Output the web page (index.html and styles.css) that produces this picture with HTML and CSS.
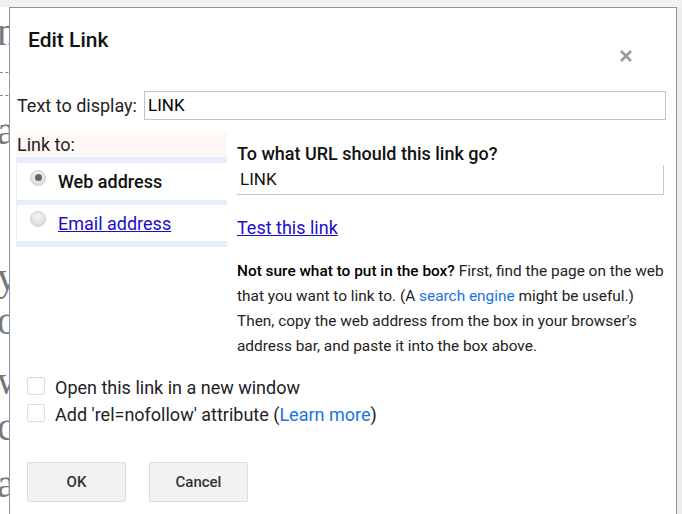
FILE: index.html
```html
<!DOCTYPE html>
<html>
<head>
<meta charset="utf-8">
<link rel="stylesheet" href="styles.css">
</head>
<body>
<div class="page">
  <div class="topbar"></div>
  <div class="doc-area">
    <div class="doc">
      <div class="doc-line l1">n</div>
      <div class="dash d1"></div>
      <div class="dash d2"></div>
      <div class="doc-line l2">a</div>
      <div class="doc-line l3">y</div>
      <div class="doc-line l4">o</div>
      <div class="doc-line l5">w</div>
      <div class="doc-line l6">c</div>
      <div class="doc-line l7">a</div>
    </div>
    <div class="gutter"></div>
  </div>
</div>

<div class="dialog">
  <div class="title">Edit Link</div>
  <button class="close" aria-label="Close">
    <svg width="14" height="14" viewBox="0 0 14 14"><path d="M2 2L12 12M12 2L2 12" stroke="#9a9a9a" stroke-width="2.6" stroke-linecap="butt"/></svg>
  </button>

  <div class="display-row">
    <label class="display-label">Text to display:</label>
    <div class="text-input">LINK</div>
  </div>

  <div class="link-area">
    <div class="tabs">
      <div class="tabs-head">Link to:</div>
      <div class="tab tab-first">
        <span class="radio checked"></span>
        <span class="tab-label bold">Web address</span>
      </div>
      <div class="tab tab-second">
        <span class="radio"></span>
        <a class="tab-label link">Email address</a>
      </div>
    </div>
    <div class="pane">
      <div class="question">To what URL should this link go?</div>
      <div class="url-input">LINK</div>
      <a class="test-link">Test this link</a>
      <p class="help"><b>Not sure what to put in the box?</b> First, find the page on the web that you want to link to. (A <a class="blue">search engine</a> might be useful.) Then, copy the web address from the box in your browser's address bar, and paste it into the box above.</p>
    </div>
  </div>

  <div class="options">
    <div class="option"><span class="check"></span><span>Open this link in a new window</span></div>
    <div class="option"><span class="check"></span><span>Add 'rel=nofollow' attribute (<a class="blue">Learn more</a>)</span></div>
  </div>

  <div class="buttons">
    <button class="btn">OK</button>
    <button class="btn">Cancel</button>
  </div>
</div>
</body>
</html>
```

FILE: styles.css
```css
html, body {
  margin: 0;
  padding: 0;
  width: 682px;
  height: 514px;
  overflow: hidden;
  background: #f3f3f3;
  font-family: Roboto, "Liberation Sans", sans-serif;
}

.page {
  width: 682px;
  height: 514px;
  display: flex;
  flex-direction: column;
}

.topbar {
  height: 7px;
  background: #f1f1f1;
}

.doc-area {
  flex: 1;
  display: flex;
}

.doc {
  flex: 1;
  background: #fff;
  font-family: "Liberation Serif", "DejaVu Serif", serif;
  color: #777;
  font-size: 40px;
  display: flex;
  flex-direction: column;
}

.gutter {
  width: 6px;
  background: #ececec;
}

.doc-line {
  line-height: 1;
  height: 36px;
  margin-left: -3px;
}

.dash {
  border-top: 1px dashed #888;
  width: 30px;
  height: 10px;
  box-sizing: border-box;
}

.l1 { margin-top: 5px; }
.d1 { margin-top: 24px; }
.d2 { margin-top: 13px; }
.l2 { margin-top: 6px; }
.l3 { margin-top: 110px; }
.l4 { margin-top: 8px; }
.l5 { margin-top: 24px; }
.l6 { margin-top: 10px; }
.l7 { margin-top: 21px; }

.dialog {
  position: absolute;
  left: 9px;
  top: 7px;
  width: 666px;
  height: 520px;
  background: #fff;
  border: 1px solid #8796ad;
  box-sizing: content-box;
  color: #222;
}

.title {
  font-size: 21px;
  font-weight: 500;
  line-height: 24px;
  padding: 20px 0 0 18px;
  color: #111;
}

.close {
  position: absolute;
  left: 609px;
  top: 41px;
  width: 14px;
  height: 14px;
  padding: 0;
  border: 0;
  background: none;
  display: block;
}
.close svg { display: block; }

.display-row {
  display: flex;
  align-items: center;
  margin: 39px 10px 0 7px;
  gap: 7px;
}

.display-label {
  font-size: 18px;
  color: #222;
}

.text-input {
  flex: 1;
  height: 27px;
  border: 1px solid #c4c4c4;
  font-family: Roboto, "Liberation Sans", sans-serif;
  font-size: 17px;
  line-height: 27px;
  padding-left: 3px;
  color: #000;
}

.link-area {
  display: flex;
  margin: 13px 12px 0 6px;
  gap: 10px;
}

.tabs {
  width: 211px;
  background: #e8eef9;
  padding-bottom: 6px;
  align-self: flex-start;
}

.tabs-head {
  background: #fdf8f3;
  font-size: 18px;
  line-height: 24px;
  padding-left: 1px;
  color: #222;
}

.tab {
  background: #fff;
  margin-left: 1px;
  height: 37px;
  display: flex;
  align-items: center;
  padding-left: 13px;
  gap: 12px;
  font-size: 18px;
}
.tab-first { margin-top: 6px; }
.tab-second { margin-top: 5px; height: 36px; }

.radio {
  width: 16px;
  height: 16px;
  border-radius: 50%;
  background: radial-gradient(circle at 50% 35%, #f4f4f4, #d6d6d6);
  border: 1px solid #cfcfcf;
  box-sizing: border-box;
  position: relative;
  margin-top: -8px;
  flex: none;
}
.radio.checked::after {
  content: "";
  position: absolute;
  left: 3.5px;
  top: 3.5px;
  width: 7px;
  height: 7px;
  border-radius: 50%;
  background: #666;
}

.tab-label { color: #111; }
.bold { font-weight: 500; }
.link {
  color: #1a0dcc;
  text-decoration: underline;
}

.pane {
  flex: 1;
  padding-top: 10px;
}

.question {
  font-size: 18px;
  font-weight: 500;
  line-height: 22px;
  color: #111;
}

.url-input {
  height: 29px;
  border-right: 1px solid #c8c8c8;
  border-bottom: 1px solid #c8c8c8;
  font-family: Roboto, "Liberation Sans", sans-serif;
  font-size: 17px;
  line-height: 29px;
  padding-left: 3px;
  color: #111;
}

.test-link {
  display: block;
  margin-top: 21px;
  font-size: 18px;
  color: #1a0dcc;
  text-decoration: underline;
  line-height: 24px;
}

.help {
  margin: 19px 0 0 0;
  font-size: 15.4px;
  line-height: 25px;
  color: #222;
}
.help b { font-weight: 500; color: #000; }

.blue { color: #1a73e8; }

.options {
  margin: 19px 0 0 17px;
  display: flex;
  flex-direction: column;
  gap: 8px;
}

.option {
  display: flex;
  align-items: center;
  gap: 10px;
  font-size: 18px;
  line-height: 19px;
  color: #222;
}

.check {
  width: 18px;
  height: 18px;
  border: 1px solid #dcdcdc;
  border-radius: 2px;
  box-sizing: border-box;
  flex: none;
  margin-top: -3px;
}

.buttons {
  display: flex;
  gap: 23px;
  margin: 38px 0 0 17px;
}

.btn {
  width: 99px;
  height: 40px;
  background: #f2f2f2;
  border: 1px solid #dcdcdc;
  border-radius: 2px;
  font-family: Roboto, "Liberation Sans", sans-serif;
  font-size: 15px;
  font-weight: 500;
  color: #333;
  padding: 0;
}
```
